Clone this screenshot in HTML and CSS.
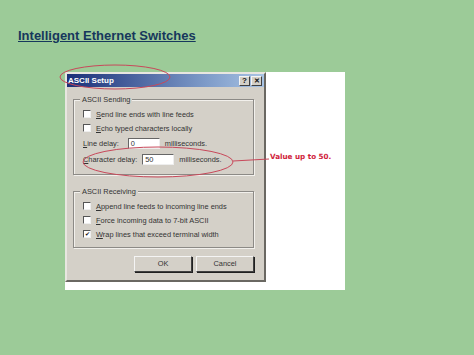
FILE: index.html
```html
<!DOCTYPE html>
<html lang="en">
  <head>
    <meta charset="UTF-8" />
    <title>Intelligent Ethernet Switches</title>
    <link rel="stylesheet" href="styles.css">
  </head>
  <body>
    <h1 class="slide-title">Intelligent Ethernet Switches</h1>

    <div class="figure">
      <div class="dialog">
        <div class="titlebar">
          <span class="caption">ASCII Setup</span>
          <span class="tbtn">?</span>
          <span class="tbtn close">&#x2715;</span>
        </div>

        <div class="group sending">
          <span class="legend">ASCII Sending</span>
          <div class="row"><span class="box"></span><span><u>S</u>end line ends with line feeds</span></div>
          <div class="row"><span class="box"></span><span><u>E</u>cho typed characters locally</span></div>
          <div class="row field">
            <span class="label line"><u>L</u>ine delay:</span>
            <span class="input">0</span>
            <span>milliseconds.</span>
          </div>
          <div class="row field">
            <span class="label"><u>C</u>haracter delay:</span>
            <span class="input">50</span>
            <span>milliseconds.</span>
          </div>
        </div>

        <div class="group receiving">
          <span class="legend">ASCII Receiving</span>
          <div class="row"><span class="box"></span><span><u>A</u>ppend line feeds to incoming line ends</span></div>
          <div class="row"><span class="box"></span><span><u>F</u>orce incoming data to 7-bit ASCII</span></div>
          <div class="row"><span class="box checked">&#x2714;</span><span><u>W</u>rap lines that exceed terminal width</span></div>
        </div>

        <div class="buttons">
          <span class="btn">OK</span>
          <span class="btn">Cancel</span>
        </div>
      </div>

      <!-- red markup drawn over the screenshot -->
      <svg class="marks" width="280" height="218" viewBox="0 0 280 218">
        <ellipse cx="50" cy="5" rx="55" ry="12" fill="none" stroke="#c8485a" stroke-width="1" />
        <ellipse cx="93" cy="90" rx="75" ry="15" fill="none" stroke="#c8485a" stroke-width="1" />
        <line x1="168" y1="89" x2="204" y2="87" stroke="#c8485a" stroke-width="1" />
      </svg>
      <span class="note">Value up to 50.</span>
    </div>
  </body>
</html>
```

FILE: styles.css
```css
body {
  margin: 0;
  width: 474px;
  height: 355px;
  background-color: #9ccb98;
  overflow: hidden;
}
.slide-title {
  margin: 0;
  padding: 28px 0 0 18px;
  font-family: "Liberation Sans", Arial, sans-serif;
  font-size: 13px;
  line-height: 15px;
  font-weight: bold;
  color: #16375c;
  text-decoration: underline;
}
.figure {
  position: relative;
  margin: 29px 0 0 65px;
  width: 280px;
  height: 218px;
  background-color: white;
}
.dialog {
  width: 197px;
  height: 206px;
  background-color: #d4d0c8;
  border: 2px solid;
  border-color: #e8e6e0 #6a6862 #6a6862 #e8e6e0;
  font-family: "Liberation Sans", Arial, sans-serif;
  font-size: 7.4px;
  color: #333;
  display: flex;
  flex-direction: column;
}
.titlebar {
  height: 13px;
  background: linear-gradient(to right, #1a2f78, #7d9ac8 70%, #a9c4e4);
  display: flex;
  align-items: center;
  gap: 1px;
  padding: 0 2px 0 1px;
}
.caption {
  flex: 1;
  color: white;
  font-weight: bold;
  font-size: 8px;
}
.tbtn {
  width: 11px;
  height: 10px;
  background-color: #d4d0c8;
  border: 1px solid;
  border-color: #f4f4f4 #404040 #404040 #f4f4f4;
  box-sizing: border-box;
  font-size: 8px;
  font-weight: bold;
  line-height: 8px;
  text-align: center;
  color: #111;
}
.close {
  font-size: 7px;
}
.group {
  position: relative;
  margin: 0 10px 0 6px;
  border: 1px solid #8c8a86;
  box-shadow: 1px 1px 0 #f2f0ec, inset 1px 1px 0 #f2f0ec;
  display: flex;
  flex-direction: column;
}
.sending {
  margin-top: 12px;
  height: 76px;
  padding: 7px 0 0 9px;
  box-sizing: border-box;
}
.receiving {
  margin-top: 16px;
  height: 57px;
  padding: 7px 0 0 9px;
  box-sizing: border-box;
}
.legend {
  position: absolute;
  top: -5px;
  left: 6px;
  padding: 0 2px;
  background-color: #d4d0c8;
  line-height: 9px;
}
.row {
  display: flex;
  align-items: center;
  height: 14px;
  gap: 5px;
}
.field {
  height: 16px;
  gap: 0;
}
.field .label {
  margin-right: 5px;
}
.field .label.line {
  margin-right: 9px;
}
.field .input {
  margin-right: 5px;
}
.box {
  width: 6px;
  height: 6px;
  background-color: white;
  border: 1px solid;
  border-color: #555 #eee #eee #555;
  font-size: 6px;
  line-height: 6px;
  text-align: center;
  color: #111;
}
.input {
  width: 28px;
  height: 9px;
  background-color: white;
  border: 1px solid;
  border-color: #666 #eee #eee #666;
  padding-left: 2px;
  line-height: 9px;
}
.buttons {
  display: flex;
  justify-content: flex-end;
  gap: 4px;
  margin: 8px 10px 0 0;
}
.btn {
  width: 56px;
  height: 14px;
  border: 1px solid;
  border-color: #f4f4f4 #404040 #404040 #f4f4f4;
  box-shadow: 1px 1px 0 #202020;
  text-align: center;
  line-height: 14px;
}
.marks {
  position: absolute;
  left: 0;
  top: 0;
  overflow: visible;
}
.note {
  position: absolute;
  left: 205px;
  top: 80px;
  font-family: "DejaVu Sans", Verdana, sans-serif;
  font-size: 7.2px;
  font-weight: bold;
  color: #d0223a;
}
```
